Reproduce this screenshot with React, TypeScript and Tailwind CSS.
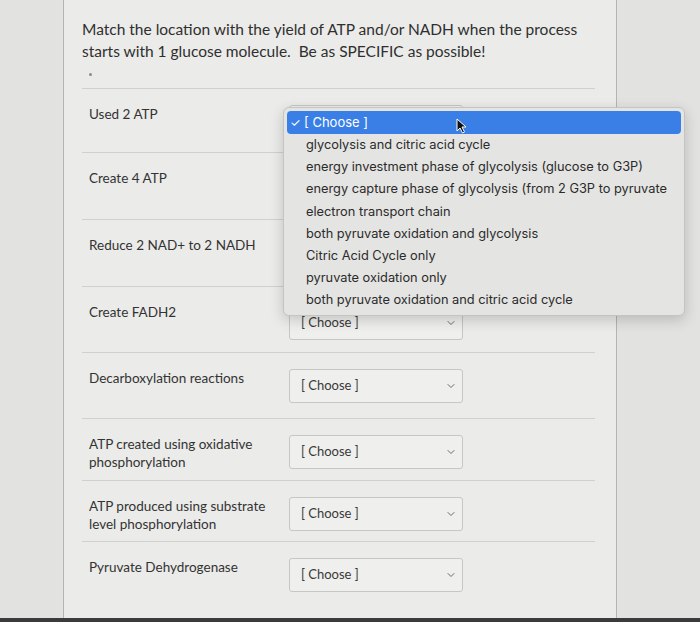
import React from 'react';
import { ChevronDown } from 'lucide-react';

const rows: { label: string; h: string; hidden?: boolean; low?: boolean }[] = [
  { label: 'Used 2 ATP', h: 'h-[64px]', hidden: true },
  { label: 'Create 4 ATP', h: 'h-[67px]', hidden: true },
  { label: 'Reduce 2 NAD+ to 2 NADH', h: 'h-[67px]', hidden: true },
  { label: 'Create FADH2', h: 'h-[66px]', low: true },
  { label: 'Decarboxylation reactions', h: 'h-[66px]' },
  { label: 'ATP created using oxidative phosphorylation', h: 'h-[62px]' },
  { label: 'ATP produced using substrate level phosphorylation', h: 'h-[61px]' },
  { label: 'Pyruvate Dehydrogenase', h: 'h-[66px]' },
];

const options: string[] = [
  'glycolysis and citric acid cycle',
  'energy investment phase of glycolysis (glucose to G3P)',
  'energy capture phase of glycolysis (from 2 G3P to pyruvate',
  'electron transport chain',
  'both pyruvate oxidation and glycolysis',
  'Citric Acid Cycle only',
  'pyruvate oxidation only',
  'both pyruvate oxidation and citric acid cycle',
];

// selects under the open list show only their frame
const Select: React.FC<{ hidden?: boolean; low?: boolean }> = ({ hidden, low }) => (
  <div className={`w-[174px] h-[34px] shrink-0 rounded-[3px] border border-[#c6c6c4] bg-[#efefed] flex items-center justify-between pl-[11px] pr-[5px] ${low ? 'mt-[3px]' : ''}`}>
    {!hidden && <span className="text-[13px] text-[#3a3a3a]">[ Choose ]</span>}
    {!hidden && <ChevronDown size={12} strokeWidth={2} className="text-[#6b6b6b]" />}
  </div>
);

const App: React.FC = () => {
  return (
    <div className="relative w-[700px] h-[622px] overflow-hidden bg-[#e2e2e0] font-['Lato','Open_Sans',sans-serif]">
      <div className="ml-[63px] w-[554px] h-[618px] bg-[#ebebe9] border-x border-[#b4b4b2] pl-[18px] pr-[21px]">
        <p className="pt-[18px] pr-[10px] text-[15.5px] leading-[22px] text-[#2f2f2f]">
          Match the location with the yield of ATP and/or NADH when the process starts with 1 glucose molecule.&nbsp; Be as SPECIFIC as possible!
        </p>
        <div className="h-[26px] pl-[7px] pt-[11px]">
          <div className="w-[3px] h-[3px] rounded-full bg-[#8a8a8a]" />
        </div>
        <div className="border-t border-[#d0d0ce]">
          {rows.map((r, i) => (
            <div key={i} className={`${r.h} ${i < rows.length - 1 ? 'border-b border-[#d0d0ce]' : ''} flex items-start pl-[7px] pt-[16px]`}>
              <div className="w-[200px] shrink-0 pr-[18px] text-[13.5px] leading-[18px] text-[#333]">{r.label}</div>
              <Select hidden={r.hidden} low={r.low} />
            </div>
          ))}
        </div>
      </div>
      <div className="h-[4px] bg-[#3b3b3b]" />

      {/* open native dropdown */}
      <div className="absolute left-[283px] top-[107px] w-[402px] rounded-[6px] border border-[#c4c4c2] bg-[#e4e4e2] p-[3px] shadow-[0_4px_14px_rgba(0,0,0,0.18)] font-['Inter','Liberation_Sans',sans-serif] text-[12.8px] text-[#2b2b2b]">
        <div className="relative h-[23px] rounded-[4px] bg-[#3a7fe6] text-white flex items-center pl-[3px]">
          <span className="w-[14px] text-[12px]">✓</span>
          <span className="text-[13px]">[ Choose ]</span>
          <svg className="absolute left-[169px] top-[7px]" width="11" height="16" viewBox="0 0 11 16">
            <path d="M1 1 L1 13 L4 10 L6.5 15 L8.5 14 L6 9 L10 9 Z" fill="#111" stroke="#fff" strokeWidth="1" />
          </svg>
        </div>
        {options.map((o, i) => (
          <div key={i} className="h-[22.2px] leading-[22.2px] pl-[19px] whitespace-nowrap">{o}</div>
        ))}
      </div>
    </div>
  );
};

export default App;
